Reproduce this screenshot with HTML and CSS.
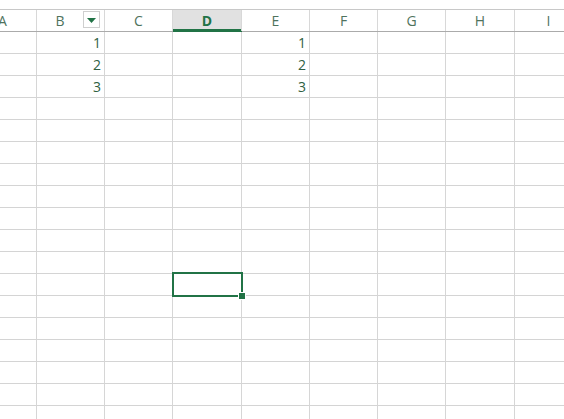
FILE: index.html
```html
<!DOCTYPE html>
<html>
<head>
<meta charset="utf-8">
<link rel="stylesheet" href="styles.css">
</head>
<body>
<div class="sheet">
  <div class="row header">
    <div class="hcell">A</div>
    <div class="hcell filter"><span class="hlabel">B</span><span class="fbtn"><svg width="9" height="5" viewBox="0 0 9 5"><path d="M0 0H9L4.5 5Z" fill="#217346"/></svg></span></div>
    <div class="hcell">C</div>
    <div class="hcell active w69">D</div>
    <div class="hcell">E</div>
    <div class="hcell">F</div>
    <div class="hcell">G</div>
    <div class="hcell w69">H</div>
    <div class="hcell">I</div>
  </div>
  <div class="row"><div class="cell"></div><div class="cell num">1</div><div class="cell"></div><div class="cell w69"></div><div class="cell num">1</div><div class="cell"></div><div class="cell"></div><div class="cell w69"></div><div class="cell"></div></div>
  <div class="row"><div class="cell"></div><div class="cell num">2</div><div class="cell"></div><div class="cell w69"></div><div class="cell num">2</div><div class="cell"></div><div class="cell"></div><div class="cell w69"></div><div class="cell"></div></div>
  <div class="row"><div class="cell"></div><div class="cell num">3</div><div class="cell"></div><div class="cell w69"></div><div class="cell num">3</div><div class="cell"></div><div class="cell"></div><div class="cell w69"></div><div class="cell"></div></div>
  <div class="row"><div class="cell"></div><div class="cell"></div><div class="cell"></div><div class="cell w69"></div><div class="cell"></div><div class="cell"></div><div class="cell"></div><div class="cell w69"></div><div class="cell"></div></div>
  <div class="row"><div class="cell"></div><div class="cell"></div><div class="cell"></div><div class="cell w69"></div><div class="cell"></div><div class="cell"></div><div class="cell"></div><div class="cell w69"></div><div class="cell"></div></div>
  <div class="row"><div class="cell"></div><div class="cell"></div><div class="cell"></div><div class="cell w69"></div><div class="cell"></div><div class="cell"></div><div class="cell"></div><div class="cell w69"></div><div class="cell"></div></div>
  <div class="row"><div class="cell"></div><div class="cell"></div><div class="cell"></div><div class="cell w69"></div><div class="cell"></div><div class="cell"></div><div class="cell"></div><div class="cell w69"></div><div class="cell"></div></div>
  <div class="row"><div class="cell"></div><div class="cell"></div><div class="cell"></div><div class="cell w69"></div><div class="cell"></div><div class="cell"></div><div class="cell"></div><div class="cell w69"></div><div class="cell"></div></div>
  <div class="row"><div class="cell"></div><div class="cell"></div><div class="cell"></div><div class="cell w69"></div><div class="cell"></div><div class="cell"></div><div class="cell"></div><div class="cell w69"></div><div class="cell"></div></div>
  <div class="row"><div class="cell"></div><div class="cell"></div><div class="cell"></div><div class="cell w69"></div><div class="cell"></div><div class="cell"></div><div class="cell"></div><div class="cell w69"></div><div class="cell"></div></div>
  <div class="row"><div class="cell"></div><div class="cell"></div><div class="cell"></div><div class="cell w69"></div><div class="cell"></div><div class="cell"></div><div class="cell"></div><div class="cell w69"></div><div class="cell"></div></div>
  <div class="row"><div class="cell"></div><div class="cell"></div><div class="cell"></div><div class="cell w69 selected"><span class="handle"></span></div><div class="cell"></div><div class="cell"></div><div class="cell"></div><div class="cell w69"></div><div class="cell"></div></div>
  <div class="row"><div class="cell"></div><div class="cell"></div><div class="cell"></div><div class="cell w69"></div><div class="cell"></div><div class="cell"></div><div class="cell"></div><div class="cell w69"></div><div class="cell"></div></div>
  <div class="row"><div class="cell"></div><div class="cell"></div><div class="cell"></div><div class="cell w69"></div><div class="cell"></div><div class="cell"></div><div class="cell"></div><div class="cell w69"></div><div class="cell"></div></div>
  <div class="row"><div class="cell"></div><div class="cell"></div><div class="cell"></div><div class="cell w69"></div><div class="cell"></div><div class="cell"></div><div class="cell"></div><div class="cell w69"></div><div class="cell"></div></div>
  <div class="row"><div class="cell"></div><div class="cell"></div><div class="cell"></div><div class="cell w69"></div><div class="cell"></div><div class="cell"></div><div class="cell"></div><div class="cell w69"></div><div class="cell"></div></div>
  <div class="row"><div class="cell"></div><div class="cell"></div><div class="cell"></div><div class="cell w69"></div><div class="cell"></div><div class="cell"></div><div class="cell"></div><div class="cell w69"></div><div class="cell"></div></div>
  <div class="row"><div class="cell"></div><div class="cell"></div><div class="cell"></div><div class="cell w69"></div><div class="cell"></div><div class="cell"></div><div class="cell"></div><div class="cell w69"></div><div class="cell"></div></div>
</div>
</body>
</html>
```
FILE: styles.css
```css
html, body {
  margin: 0;
  padding: 0;
  background: #ffffff;
  overflow: hidden;
}
body {
  width: 564px;
  height: 419px;
}
.sheet {
  margin-top: 9px;
  margin-left: -31px;
  width: 700px;
  font-family: "Open Sans", "Liberation Sans", sans-serif;
}
.row {
  display: flex;
}
.header {
  border-top: 1px solid #c8c8c8;
  border-bottom: 1px solid #ababab;
  height: 21px;
}
.hcell, .cell {
  box-sizing: border-box;
  width: 68px;
  flex: none;
}
.w69 {
  width: 69px;
}
.hcell {
  height: 21px;
  border-right: 1px solid #d8d8d8;
  font-size: 14px;
  line-height: 21px;
  text-align: center;
  color: #4f735d;
}
.hcell.active {
  background: #e1e1e1;
  color: #217346;
  font-weight: 700;
  box-shadow: inset 0 -2px 0 #217346;
  position: relative;
}
.hcell.active::after {
  content: "";
  position: absolute;
  left: 0;
  right: -1px;
  bottom: -1px;
  height: 1px;
  background: #217346;
}
.hcell.filter {
  display: flex;
  align-items: flex-start;
}
.hlabel {
  flex: 1;
  text-align: center;
}
.fbtn {
  box-sizing: border-box;
  width: 17px;
  height: 17px;
  margin-top: 1px;
  margin-right: 4px;
  border: 1px solid #cfcfcf;
  background: #ffffff;
  display: flex;
  align-items: center;
  justify-content: center;
}
.fbtn svg {
  display: block;
  margin-top: 1px;
}
.cell {
  height: 22px;
  border-right: 1px solid #d6d6d6;
  border-bottom: 1px solid #d4d4d4;
  font-size: 14px;
  line-height: 21px;
  color: #2f5f42;
}
.num {
  text-align: right;
  padding-right: 3px;
}
.selected {
  position: relative;
}
.selected::before {
  content: "";
  position: absolute;
  left: -1px;
  top: -2px;
  width: 71px;
  height: 25px;
  box-sizing: border-box;
  border: 2px solid #217346;
}
.handle {
  position: absolute;
  left: 65px;
  top: 18px;
  width: 8px;
  height: 8px;
  box-sizing: border-box;
  background: #217346;
  border: 1px solid #ffffff;
  z-index: 2;
}
```
